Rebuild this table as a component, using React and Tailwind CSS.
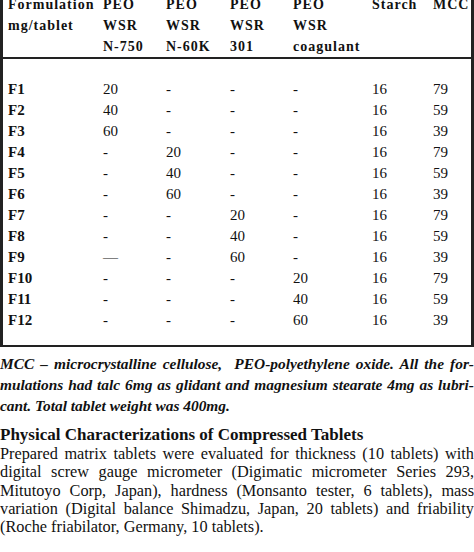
const header = [
  ["Formulation", "mg/tablet", ""],
  ["PEO", "WSR", "N-750"],
  ["PEO", "WSR", "N-60K"],
  ["PEO", "WSR", "301"],
  ["PEO", "WSR", "coagulant"],
  ["Starch", "", ""],
  ["MCC", "", ""],
];

const rows = [
  ["F1", "20", "-", "-", "-", "16", "79"],
  ["F2", "40", "-", "-", "-", "16", "59"],
  ["F3", "60", "-", "-", "-", "16", "39"],
  ["F4", "-", "20", "-", "-", "16", "79"],
  ["F5", "-", "40", "-", "-", "16", "59"],
  ["F6", "-", "60", "-", "-", "16", "39"],
  ["F7", "-", "-", "20", "-", "16", "79"],
  ["F8", "-", "-", "40", "-", "16", "59"],
  ["F9", "—", "-", "60", "-", "16", "39"],
  ["F10", "-", "-", "-", "20", "16", "79"],
  ["F11", "-", "-", "-", "40", "16", "59"],
  ["F12", "-", "-", "-", "60", "16", "39"],
];

const cols = "grid grid-cols-[95px_63px_64px_63px_79px_61px_1fr]";

const caption = [
  "MCC – microcrystalline cellulose,  PEO-polyethylene oxide. All the for-",
  "mulations had talc 6mg as glidant and magnesium stearate 4mg as lubri-",
];

const para = [
  "Prepared matrix tablets were evaluated for thickness (10 tablets) with",
  "digital screw gauge micrometer (Digimatic micrometer Series 293,",
  "Mitutoyo Corp, Japan), hardness (Monsanto tester, 6 tablets), mass",
  "variation (Digital balance Shimadzu, Japan, 20 tablets) and friability",
];

export default function App() {
  return (
    <div className="w-[474px] h-[552px] overflow-hidden bg-white text-[#111] font-['Liberation_Serif','Times_New_Roman',serif]">
      {/* Table */}
      <div className="border-l-[3px] border-r-[3px] border-b-[2px] border-[#222] -mt-[6px]">
        <div className={`${cols} pl-[5px] text-[14px] font-bold tracking-[1px] leading-[21px]`}>
          {header.map((h, i) => (
            <div key={i}>
              {h.map((line, j) => (
                <div key={j} className="h-[21px] whitespace-nowrap">
                  {line}
                </div>
              ))}
            </div>
          ))}
        </div>
        <div className="border-t-[2px] border-[#222] pt-[20px] pb-[14px]">
          {rows.map((r) => (
            <div key={r[0]} className={`${cols} pl-[5px] text-[15px] leading-[21px]`}>
              {r.map((c, i) => (
                <div key={i} className={i === 0 ? "font-bold" : ""}>
                  {c}
                </div>
              ))}
            </div>
          ))}
        </div>
      </div>

      {/* Caption */}
      <div className="pt-[6px] text-[15.4px] font-bold italic leading-[21px]">
        {caption.map((l, i) => (
          <div key={i} className="text-justify [text-align-last:justify] whitespace-pre">
            {l}
          </div>
        ))}
        <div>cant. Total tablet weight was 400mg.</div>
      </div>

      {/* Section */}
      <div className="mt-[9px] text-[17px] font-bold leading-[20px]">
        Physical Characterizations of Compressed Tablets
      </div>
      <div className="text-[16.3px] leading-[18.3px]">
        {para.map((l, i) => (
          <div key={i} className="text-justify [text-align-last:justify]">
            {l}
          </div>
        ))}
        <div>(Roche friabilator, Germany, 10 tablets).</div>
      </div>
    </div>
  );
}
